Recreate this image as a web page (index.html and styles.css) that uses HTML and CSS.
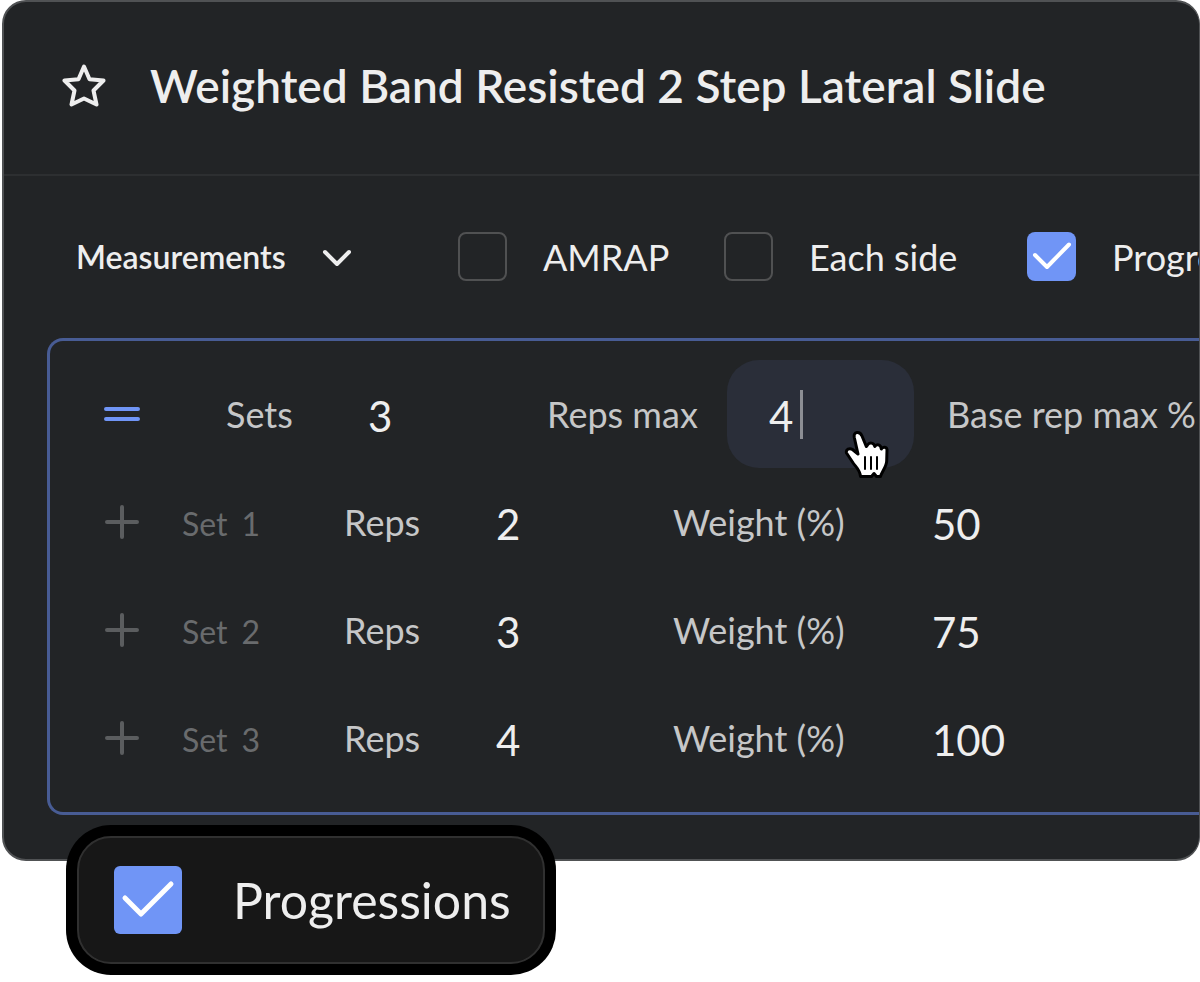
FILE: index.html
```
<!DOCTYPE html>
<html lang="en">
<head>
    <meta charset="UTF-8">
    <meta name="viewport" content="width=device-width, initial-scale=1.0">
    <title>Exercise progressions</title>
    <link rel="stylesheet" href="styles.css">
</head>
<body>
    <main class="exercise-card">
        <header class="card-header">
            <button type="button" class="icon-btn" aria-label="Favourite">
                <svg class="star-icon" viewBox="0 0 44 44">
                    <path d="M22 2.500 L27.500 15.200 L41.500 16.500 L31.500 26.500 L34.500 40.500 L22 34.500 L9.500 40.500 L12.500 26.500 L2.500 16.500 L16.500 15.200 Z"/>
                </svg>
            </button>
            <h1 class="title">Weighted Band Resisted 2 Step Lateral Slide</h1>
        </header>

        <div class="toolbar">
            <div class="select-wrap">
                <select class="measure-select" aria-label="Measurements">
                    <option>Measurements</option>
                </select>
                <svg class="chevron-icon" viewBox="0 0 30 18"><path d="M3 3 L15 15 L27 3"/></svg>
            </div>
            <label class="option">
                <span class="check-wrap"><input type="checkbox" class="checkbox"></span>
                <span>AMRAP</span>
            </label>
            <label class="option">
                <span class="check-wrap"><input type="checkbox" class="checkbox"></span>
                <span>Each side</span>
            </label>
            <label class="option">
                <span class="check-wrap">
                    <input type="checkbox" class="checkbox" checked>
                    <svg class="check-icon" viewBox="0 0 49 49"><path d="M8 23 L20 35 L42 12.500"/></svg>
                </span>
                <span>Progressions</span>
            </label>
        </div>

        <section class="sets-panel">
            <div class="row row-main">
                <button type="button" class="icon-btn" aria-label="Reorder">
                    <svg class="drag-icon" viewBox="0 0 36 36"><path d="M2 13 H34 M2 23 H34"/></svg>
                </button>
                <label class="label" for="sets">Sets</label>
                <input class="value" id="sets" type="text" value="3">
                <label class="label" for="repsMax">Reps max</label>
                <div class="field-wrap">
                    <input class="value value-active" id="repsMax" type="text" value="4">
                    <span class="caret"></span>
                    <svg class="pointer-icon" viewBox="0 0 46 50">
                        <path d="M13 3.500 C10.500 3.800 9.800 6 10.300 8.500 L14 25 L8.500 20.500 C5.500 18.500 1.500 20.500 2.500 24 L9.500 34.500 C12 38 16 41 16.500 47.500 L27.500 47.500 L30 44.500 L32.500 47.500 H36.500 C37.500 43 42.500 38 42.700 32 L43 20.500 C42.500 17.500 38.500 17.500 37.300 20 C37 15.500 32.500 14.500 30.800 17.500 C30 13.500 25.500 13 23.500 16 L22.300 17.500 L18 7 C17 4.500 15.500 3.200 13 3.500 Z"/>
                        <path class="pointer-lines" d="M21 28 V40 M27 28 V40 M33 28 V40"/>
                    </svg>
                </div>
                <span class="label">Base rep max %</span>
            </div>

            <div class="row row-set">
                <button type="button" class="icon-btn" aria-label="Add after set 1">
                    <svg class="plus-icon" viewBox="0 0 36 36"><path d="M3 18 H33 M18 3 V33"/></svg>
                </button>
                <span class="set-name">Set <span>1</span></span>
                <label class="label" for="reps1">Reps</label>
                <input class="value" id="reps1" type="text" value="2">
                <label class="label" for="weight1">Weight (%)</label>
                <input class="value" id="weight1" type="text" value="50">
            </div>

            <div class="row row-set">
                <button type="button" class="icon-btn" aria-label="Add after set 2">
                    <svg class="plus-icon" viewBox="0 0 36 36"><path d="M3 18 H33 M18 3 V33"/></svg>
                </button>
                <span class="set-name">Set <span>2</span></span>
                <label class="label" for="reps2">Reps</label>
                <input class="value" id="reps2" type="text" value="3">
                <label class="label" for="weight2">Weight (%)</label>
                <input class="value" id="weight2" type="text" value="75">
            </div>

            <div class="row row-set">
                <button type="button" class="icon-btn" aria-label="Add after set 3">
                    <svg class="plus-icon" viewBox="0 0 36 36"><path d="M3 18 H33 M18 3 V33"/></svg>
                </button>
                <span class="set-name">Set <span>3</span></span>
                <label class="label" for="reps3">Reps</label>
                <input class="value" id="reps3" type="text" value="4">
                <label class="label" for="weight3">Weight (%)</label>
                <input class="value" id="weight3" type="text" value="100">
            </div>
        </section>
    </main>

    <label class="callout">
        <span class="check-wrap check-wrap-large">
            <input type="checkbox" class="checkbox" checked>
            <svg class="check-icon" viewBox="0 0 68 68"><path d="M11 32 L27 48 L57 18"/></svg>
        </span>
        <span>Progressions</span>
    </label>
</body>
</html>
```
FILE: styles.css
```
* {
    box-sizing: border-box;
}
body {
    margin: 0;
    padding-bottom: 19px;
    background: #fff;
    color: #eee;
    font-family: Lato, "Liberation Sans", sans-serif;
}
button, input, select {
    margin: 0;
    padding: 0;
    border: none;
    background: none;
    color: inherit;
    font-family: inherit;
}
svg {
    display: block;
    fill: none;
    stroke-linecap: round;
    stroke-linejoin: round;
}
.exercise-card {
    margin-left: 2px;
    padding-bottom: 44px;
    background: #222426;
    border: 2px solid #505254;
    border-right-width: 1px;
    border-radius: 24px;
    overflow: hidden;
    white-space: nowrap;
}
.icon-btn {
    cursor: pointer;
}

/* header */
.card-header {
    display: flex;
    align-items: center;
    gap: 44px;
    height: 174px;
    padding: 0 0 4px 58px;
    border-bottom: 2px solid #2d2f31;
}
.star-icon {
    width: 44px;
    height: 44px;
    stroke: #eee;
    stroke-width: 4;
}
.title {
    margin: 0;
    font-size: 46px;
    line-height: 56px;
    font-weight: 600;
}

/* toolbar */
.toolbar {
    display: grid;
    grid-template-columns: 382px 266px 303px 1fr;
    align-items: center;
    padding: 56px 0 57px 72px;
}
.select-wrap {
    position: relative;
    width: 276px;
}
.measure-select {
    width: 100%;
    appearance: none;
    font-size: 32px;
    line-height: 40px;
    font-weight: 600;
    cursor: pointer;
}
.chevron-icon {
    position: absolute;
    right: 0;
    top: 12px;
    width: 30px;
    height: 18px;
    stroke: #eee;
    stroke-width: 4;
    pointer-events: none;
}
.option {
    display: flex;
    align-items: center;
    gap: 36px;
    font-size: 36px;
    line-height: 44px;
}
.check-wrap {
    position: relative;
    flex: none;
    width: 49px;
    height: 49px;
}
.checkbox {
    display: block;
    width: 100%;
    height: 100%;
    appearance: none;
    border: 2px solid #505152;
    border-radius: 8px;
}
.checkbox:checked {
    border: none;
    background: #7095f6;
}
.check-icon {
    position: absolute;
    inset: 0;
    stroke: #fff;
    stroke-width: 4;
    pointer-events: none;
}

/* sets */
.sets-panel {
    margin-left: 43px;
    padding: 19px 0 20px;
    border: 3px solid #485c94;
    border-right: none;
    border-radius: 16px 0 0 16px;
}
.row {
    display: grid;
    align-items: center;
    height: 108px;
    padding-left: 54px;
}
.row-main {
    grid-template-columns: 122px 142px 179px 180px 220px 1fr;
}
.row-set {
    grid-template-columns: 78px 162px 152px 177px 259px 1fr;
}
.drag-icon, .plus-icon {
    width: 36px;
    height: 36px;
    stroke-width: 4;
}
.drag-icon {
    stroke: #7095f6;
}
.plus-icon {
    stroke: #5b5d5f;
}
.label {
    font-size: 36px;
    line-height: 44px;
    color: #c6c7c8;
}
.value {
    width: 100%;
    padding-top: 3px;
    font-size: 42px;
    line-height: 50px;
}
.set-name {
    display: flex;
    gap: 14px;
    padding-top: 3px;
    font-size: 32px;
    line-height: 40px;
    color: #696b6d;
}
.field-wrap {
    position: relative;
    width: 187px;
}
.value-active {
    height: 108px;
    padding-left: 42px;
    background: #2a2e39;
    border-radius: 32px;
}
.caret {
    position: absolute;
    left: 73px;
    top: 30px;
    width: 3px;
    height: 49px;
    background: #8c8e94;
}
.pointer-icon {
    position: absolute;
    left: 117px;
    top: 69px;
    width: 46px;
    height: 50px;
    fill: #fff;
    stroke: #000;
    stroke-width: 3;
}
.pointer-lines {
    stroke-width: 2;
}

/* floating option */
.callout {
    position: relative;
    display: flex;
    align-items: center;
    gap: 51px;
    width: 468px;
    height: 128px;
    margin: -25px 0 0 77px;
    padding-left: 35px;
    background: #171717;
    border: 2px solid #303030;
    border-radius: 34px;
    box-shadow: 0 0 0 11px #000;
    font-size: 50px;
    line-height: 60px;
}
.check-wrap-large {
    width: 68px;
    height: 68px;
}
.check-wrap-large .checkbox {
    border-radius: 6px;
}
.check-wrap-large .check-icon {
    stroke-width: 5;
}
```
